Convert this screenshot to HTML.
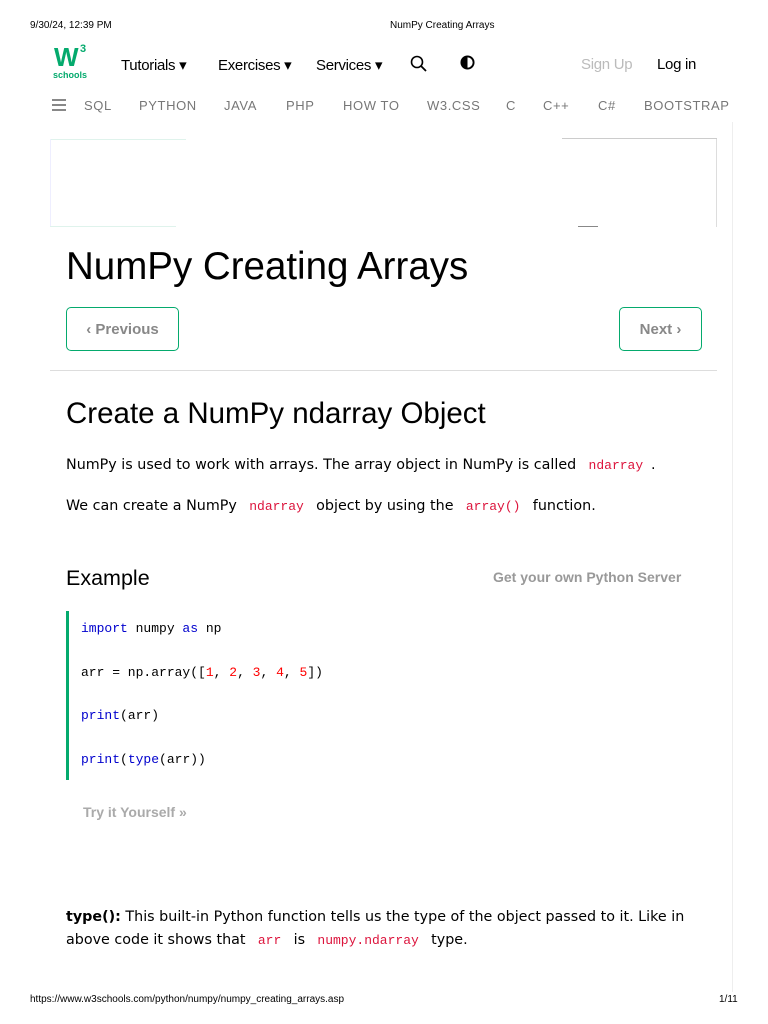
<!DOCTYPE html>
<html><head><meta charset="utf-8"><style>
*{margin:0;padding:0;box-sizing:border-box}
body{width:768px;height:1024px;background:#fff;font-family:"Liberation Sans",sans-serif;color:#000;position:relative;overflow:hidden}
.a{position:absolute;white-space:nowrap}
.hdr{font-size:10px;top:20px}
.nav{font-size:15px;top:56px;color:#000;letter-spacing:-0.3px}
.tn{font-size:13px;top:98px;color:#777;letter-spacing:0.6px}
.code{font-family:"Liberation Mono",monospace;font-size:13px}
.kw{color:#0000cd}.nm{color:#f00}
.body{font-family:"DejaVu Sans",sans-serif;font-size:14.3px}
.red{font-family:"Liberation Mono",monospace;font-size:13px;color:#dc143c}
.btn{position:absolute;border:1px solid #04aa6d;border-radius:5px;height:44px;top:307px;font-size:15px;font-weight:bold;color:#888;display:flex;align-items:center;justify-content:center}
</style></head><body>
<div class="a hdr" style="left:30px">9/30/24, 12:39 PM</div>
<div class="a hdr" style="left:390px">NumPy Creating Arrays</div>
<div class="a" style="left:54px;top:44px;color:#04aa6d;font-weight:bold;font-size:26px;line-height:26px">W</div>
<div class="a" style="left:80px;top:43px;color:#04aa6d;font-size:11px;font-weight:bold">3</div>
<div class="a" style="left:53px;top:70px;color:#04aa6d;font-size:9px;font-weight:bold">schools</div>
<div class="a nav" style="left:121px">Tutorials ▾</div>
<div class="a nav" style="left:218px">Exercises ▾</div>
<div class="a nav" style="left:316px">Services ▾</div>
<svg class="a" style="left:410px;top:55px" width="18" height="18" viewBox="0 0 18 18"><circle cx="7" cy="7" r="5.5" fill="none" stroke="#000" stroke-width="1.6"/><line x1="11" y1="11" x2="16" y2="16" stroke="#000" stroke-width="1.8"/></svg>
<svg class="a" style="left:460px;top:55px" width="15" height="15" viewBox="0 0 16 16"><circle cx="8" cy="8" r="6.5" fill="none" stroke="#000" stroke-width="2"/><path d="M8 1.5A6.5 6.5 0 0 0 8 14.5Z" fill="#000"/></svg>
<div class="a nav" style="left:581px;color:#bbb">Sign Up</div>
<div class="a nav" style="left:657px">Log in</div>
<div class="a" style="left:52px;top:99px;width:14px;height:2px;background:#888;box-shadow:0 5px 0 #888,0 10px 0 #888"></div>
<div class="a tn" style="left:84px">SQL</div>
<div class="a tn" style="left:139px">PYTHON</div>
<div class="a tn" style="left:224px">JAVA</div>
<div class="a tn" style="left:286px">PHP</div>
<div class="a tn" style="left:343px">HOW TO</div>
<div class="a tn" style="left:427px">W3.CSS</div>
<div class="a tn" style="left:506px">C</div>
<div class="a tn" style="left:543px">C++</div>
<div class="a tn" style="left:598px">C#</div>
<div class="a tn" style="left:644px">BOOTSTRAP</div>
<div class="a" style="left:732px;top:122px;width:1px;height:870px;background:#eee"></div>
<div class="a" style="left:50px;top:139px;width:136px;height:1px;background:#dff3ec"></div>
<div class="a" style="left:50px;top:139px;width:1px;height:88px;background:#eef"></div>
<div class="a" style="left:50px;top:226px;width:126px;height:1px;background:#dff3ec"></div>
<div class="a" style="left:562px;top:138px;width:155px;height:1px;background:#ccc"></div>
<div class="a" style="left:716px;top:139px;width:1px;height:88px;background:#ddd"></div>
<div class="a" style="left:578px;top:226px;width:20px;height:1px;background:#888"></div>
<div class="a" style="left:66px;top:245px;font-size:38.5px">NumPy Creating Arrays</div>
<div class="btn" style="left:66px;width:113px">‹ Previous</div>
<div class="btn" style="left:619px;width:83px">Next ›</div>
<div class="a" style="left:50px;top:370px;width:667px;height:1px;background:#ddd"></div>
<div class="a" style="left:66px;top:397px;font-size:29.5px">Create a NumPy ndarray Object</div>
<div class="a body" style="left:66px;top:457px">NumPy is used to work with arrays. The array object in NumPy is called <span class="red">&nbsp;ndarray&nbsp;</span>.</div>
<div class="a body" style="left:66px;top:498px">We can create a NumPy <span class="red">&nbsp;ndarray&nbsp;</span> object by using the <span class="red">&nbsp;array()&nbsp;</span> function.</div>
<div class="a" style="left:66px;top:566px;font-size:21.5px">Example</div>
<div class="a" style="left:493px;top:569px;font-size:14px;font-weight:bold;color:#999">Get your own Python Server</div>
<div class="a" style="left:66px;top:611px;width:3px;height:169px;background:#04aa6d"></div>
<div class="a code" style="left:81px;top:621px"><span class="kw">import</span> numpy <span class="kw">as</span> np</div>
<div class="a code" style="left:81px;top:665px">arr = np.array([<span class="nm">1</span>, <span class="nm">2</span>, <span class="nm">3</span>, <span class="nm">4</span>, <span class="nm">5</span>])</div>
<div class="a code" style="left:81px;top:708px"><span class="kw">print</span>(arr)</div>
<div class="a code" style="left:81px;top:752px"><span class="kw">print</span>(<span class="kw">type</span>(arr))</div>
<div class="a" style="left:83px;top:804px;font-size:14px;font-weight:bold;color:#aaa">Try it Yourself »</div>
<div class="a body" style="left:66px;top:909px"><b>type():</b> This built-in Python function tells us the type of the object passed to it. Like in</div>
<div class="a body" style="left:66px;top:932px">above code it shows that <span class="red">&nbsp;arr&nbsp;</span> is <span class="red">&nbsp;numpy.ndarray&nbsp;</span> type.</div>
<div class="a hdr" style="left:30px;top:994px">https://www.w3schools.com/python/numpy/numpy_creating_arrays.asp</div>
<div class="a hdr" style="left:719px;top:994px">1/11</div>
</body></html>
